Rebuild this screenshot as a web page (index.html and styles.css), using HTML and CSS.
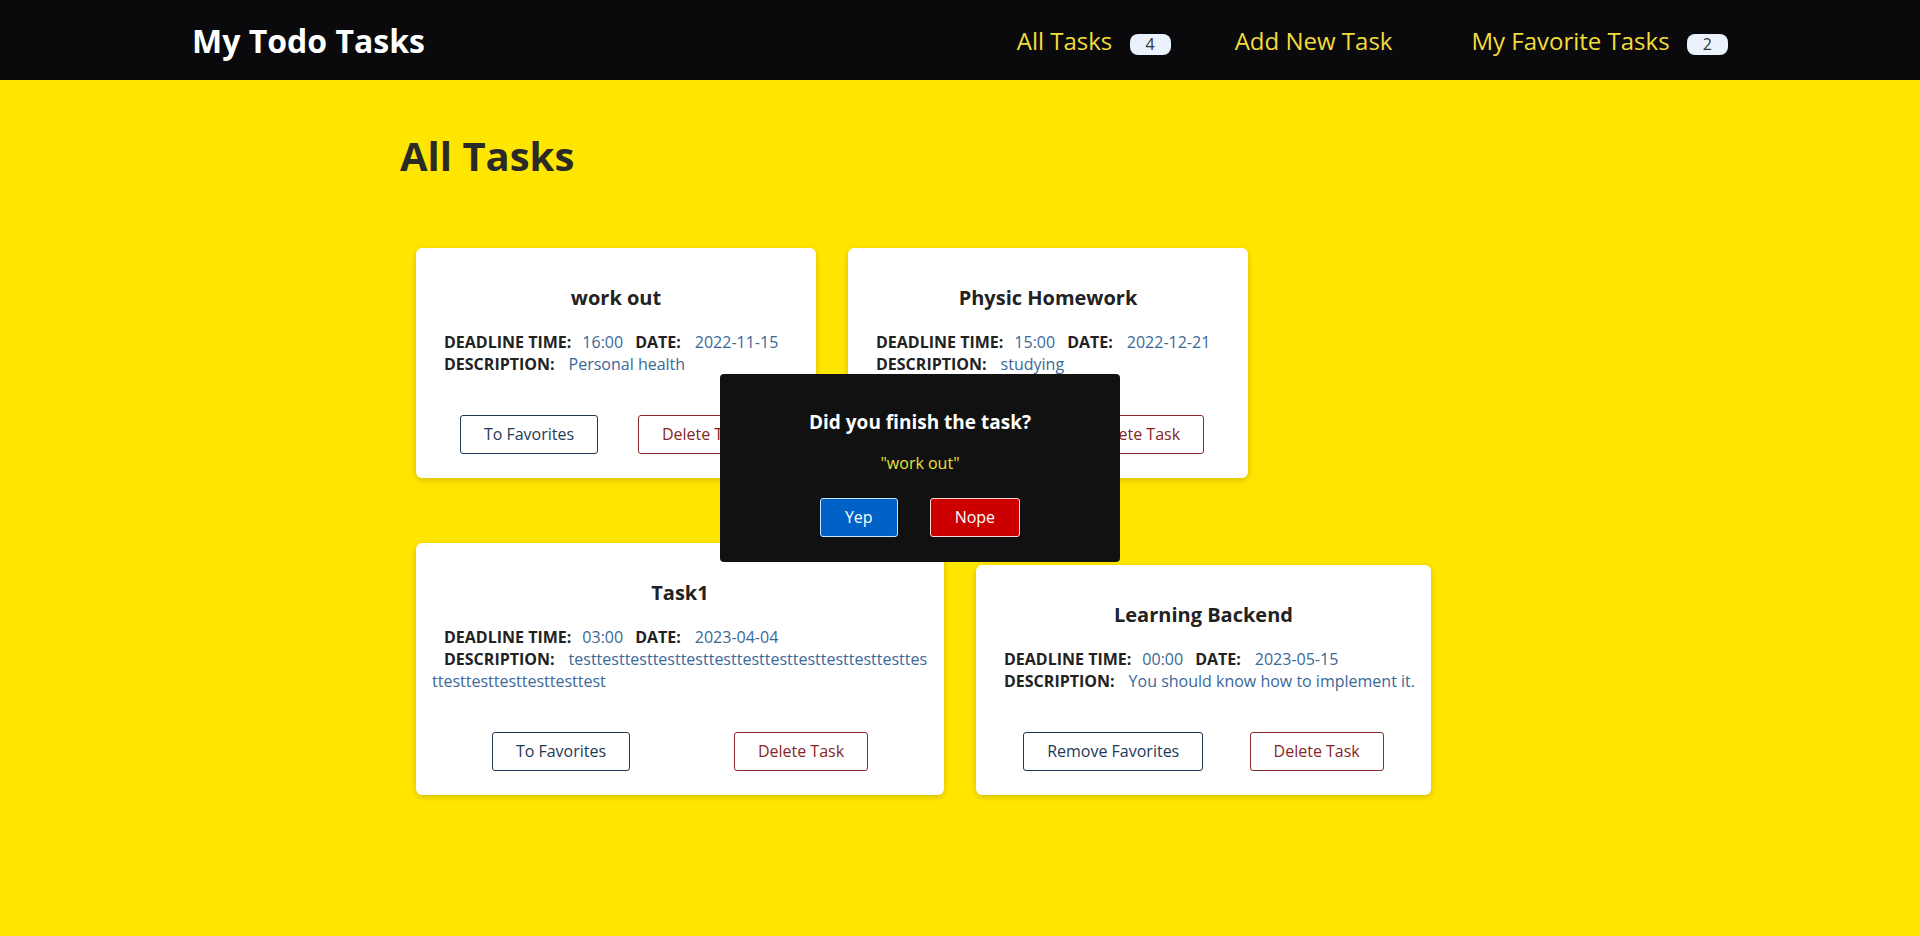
FILE: index.html
```html
<!DOCTYPE html>
<html lang="en">
<head>
  <meta charset="UTF-8">
  <title>My Todo Tasks</title>
  <link rel="stylesheet" href="styles.css">
</head>
<body>
  <header class="topbar">
    <div class="brand">My Todo Tasks</div>
    <nav class="nav">
      <a href="#" class="nav-link">All Tasks <span class="badge">4</span></a>
      <a href="#" class="nav-link nav-add">Add New Task</a>
      <a href="#" class="nav-link">My Favorite Tasks <span class="badge">2</span></a>
    </nav>
  </header>

  <main class="page">
    <h1>All Tasks</h1>

    <div class="task-list">
      <div class="task-card">
        <h3>work out</h3>
        <div class="task-info">
          <p><span class="lbl">DEADLINE TIME:</span><span class="val">16:00</span><span class="lbl">DATE:</span><span class="val wide">2022-11-15</span></p>
          <p><span class="lbl">DESCRIPTION:</span><span class="val wide">Personal health</span></p>
        </div>
        <div class="task-actions">
          <button class="btn btn-fav">To Favorites</button>
          <button class="btn btn-delete">Delete Task</button>
        </div>
      </div>

      <div class="task-card">
        <h3>Physic Homework</h3>
        <div class="task-info">
          <p><span class="lbl">DEADLINE TIME:</span><span class="val">15:00</span><span class="lbl">DATE:</span><span class="val wide">2022-12-21</span></p>
          <p><span class="lbl">DESCRIPTION:</span><span class="val wide">studying</span></p>
        </div>
        <div class="task-actions">
          <button class="btn btn-fav">To Favorites</button>
          <button class="btn btn-delete">Delete Task</button>
        </div>
      </div>

      <div class="task-card">
        <h3>Task1</h3>
        <div class="task-info">
          <p><span class="lbl">DEADLINE TIME:</span><span class="val">03:00</span><span class="lbl">DATE:</span><span class="val wide">2023-04-04</span></p>
          <p><span class="lbl">DESCRIPTION:</span><span class="val wide">testtesttesttesttesttesttesttesttesttesttesttesttesttesttesttesttesttesttest</span></p>
        </div>
        <div class="task-actions">
          <button class="btn btn-fav">To Favorites</button>
          <button class="btn btn-delete">Delete Task</button>
        </div>
      </div>

      <div class="task-card">
        <h3>Learning Backend</h3>
        <div class="task-info">
          <p><span class="lbl">DEADLINE TIME:</span><span class="val">00:00</span><span class="lbl">DATE:</span><span class="val wide">2023-05-15</span></p>
          <p><span class="lbl">DESCRIPTION:</span><span class="val wide">You should know how to implement it.</span></p>
        </div>
        <div class="task-actions">
          <button class="btn btn-fav">Remove Favorites</button>
          <button class="btn btn-delete">Delete Task</button>
        </div>
      </div>
    </div>
  </main>

  <!-- confirm dialog -->
  <div class="confirm">
    <h2>Did you finish the task?</h2>
    <p class="confirm-name">"work out"</p>
    <div class="confirm-actions">
      <button class="confirm-btn yep">Yep</button>
      <button class="confirm-btn nope">Nope</button>
    </div>
  </div>
</body>
</html>
```

FILE: styles.css
```css
* {
  box-sizing: border-box;
}

body {
  margin: 0;
  font-family: "Open Sans", "Noto Sans", sans-serif;
  background: #ffe600;
  color: #2b2a26;
  min-height: 100vh;
}

.topbar {
  height: 80px;
  background: #0a090b;
  display: flex;
  align-items: center;
  justify-content: space-between;
  padding: 0 192px;
}

.brand {
  color: #fff;
  font-size: 32px;
  font-weight: 700;
}

.nav {
  display: flex;
  align-items: center;
}

.nav-link {
  color: #f2dc3c;
  font-size: 24px;
  text-decoration: none;
  margin-left: 64px;
}

.nav-add {
  margin-right: 15px;
}

.badge {
  display: inline-block;
  margin-left: 11px;
  padding: 0 16px;
  line-height: 21px;
  font-size: 16px;
  color: #333;
  background: #eaf2fb;
  border-radius: 8px;
}

.page {
  max-width: 1120px;
  margin: 0 auto;
  padding-top: 48px;
}

h1 {
  font-size: 40px;
  font-weight: 700;
  margin: 0 0 65px;
}

.task-list {
  display: flex;
  flex-wrap: wrap;
  align-items: flex-end;
  gap: 65px 32px;
  padding: 0 16px;
}

.task-card {
  background: #fff;
  border-radius: 6px;
  box-shadow: 0 2px 6px rgba(0, 0, 0, 0.18);
  padding: 16px;
  min-width: 400px;
  max-width: 528px;
}

.task-card h3 {
  text-align: center;
  font-size: 20px;
  font-weight: 700;
  color: #222;
  margin: 20px 0;
}

.task-info p {
  margin: 0;
  font-size: 16px;
  word-break: break-all;
}

.lbl {
  font-weight: 700;
  color: #222;
  margin-left: 12px;
}

.val {
  color: #3a6898;
  margin-left: 11px;
}

.val.wide {
  margin-left: 14px;
}

.task-actions {
  display: flex;
  justify-content: space-around;
  margin-top: 40px;
  padding: 0 8px 8px;
}

.btn {
  font-family: inherit;
  font-size: 16px;
  line-height: 21px;
  padding: 8px 23px;
  background: #fff;
  border-radius: 3px;
  cursor: pointer;
}

.btn-fav {
  color: #1d3a56;
  border: 1px solid #1d3a56;
}

.btn-delete {
  color: #862626;
  border: 1px solid #8c2a2a;
}

.confirm {
  position: fixed;
  top: 40%;
  left: 37.5%;
  width: 400px;
  background: #111;
  border-radius: 4px;
  text-align: center;
  padding: 16px 16px 25px;
}

.confirm h2 {
  color: #fff;
  font-size: 19px;
  font-weight: 700;
  margin: 19px 0 17px;
}

.confirm-name {
  color: #e8e23a;
  font-size: 16px;
  margin: 0 0 24px;
}

.confirm-actions {
  display: flex;
  justify-content: center;
  gap: 32px;
}

.confirm-btn {
  font-family: inherit;
  font-size: 16px;
  font-weight: 500;
  line-height: 21px;
  padding: 8px 24px;
  color: #fff;
  border-radius: 3px;
  cursor: pointer;
}

.yep {
  background: #0062c6;
  border: 1px solid #c4e6ff;
}

.nope {
  background: #cc0000;
  border: 1px solid #ffd6d6;
}
```
